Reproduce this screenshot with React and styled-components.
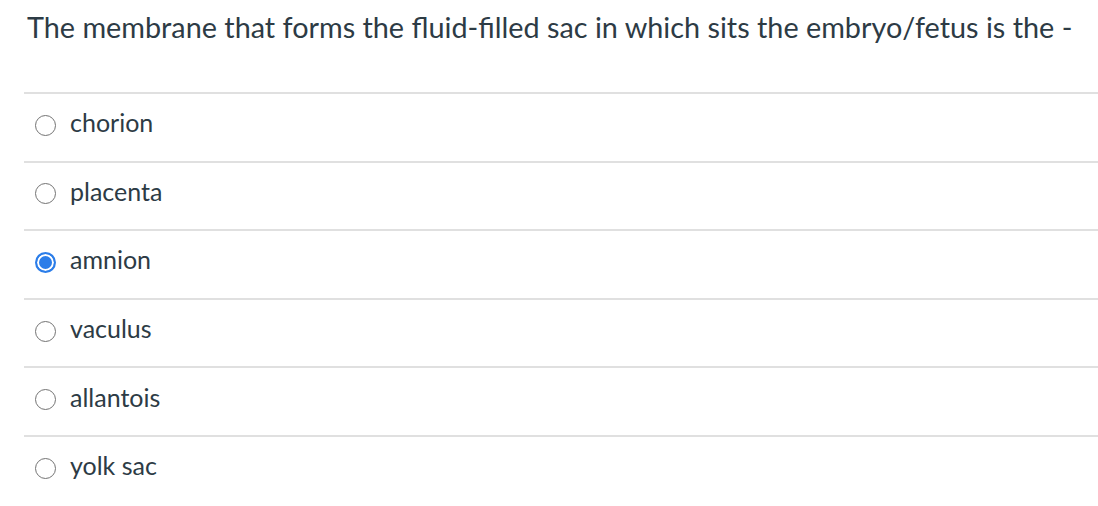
import React, { useState } from "react";
import styled, { createGlobalStyle } from "styled-components";

const GlobalStyle = createGlobalStyle`
  body {
    margin: 0;
    background: #fff;
    font-family: Lato, "Open Sans", sans-serif;
    color: #2d3b45;
  }
`;

const Page = styled.div`
  padding: 8px 0 0 24px;
`;

const Question = styled.h1`
  margin: 0 0 46px 3px;
  font-size: 28.8px;
  font-weight: 400;
  line-height: 38px;
  color: #2d3b45;
`;

const AnswerList = styled.div`
  border-top: 2px solid #e0e0e0;
`;

const Answer = styled.label`
  display: flex;
  align-items: center;
  gap: 14px;
  height: 66.6px;
  padding-left: 11px;
  border-bottom: 2px solid #e0e0e0;
  cursor: pointer;

  &:last-child {
    border-bottom-color: transparent;
  }
`;

const Radio = styled.span`
  box-sizing: border-box;
  width: 21px;
  height: 21px;
  border-radius: 50%;
  border: ${(p) => (p.checked ? "2px solid #2b7de9" : "1.6px solid #737373")};
  background: ${(p) => (p.checked ? "#2b7de9" : "#fff")};
  box-shadow: ${(p) => (p.checked ? "inset 0 0 0 2px #fff" : "none")};
  flex-shrink: 0;
  margin-top: -4px;
`;

const AnswerText = styled.span`
  font-size: 25px;
  line-height: 30px;
  color: #2d3b45;
  margin-top: -10px;
`;

const options = ["chorion", "placenta", "amnion", "vaculus", "allantois", "yolk sac"];

export default function App() {
  const [selected, setSelected] = useState("amnion");
  return (
    <Page>
      <GlobalStyle />
      <Question>
        The membrane that forms the fluid-filled sac in which sits the embryo/fetus is the -
      </Question>
      <AnswerList>
        {options.map((o) => (
          <Answer key={o} onClick={() => setSelected(o)}>
            <Radio checked={selected === o} />
            <AnswerText>{o}</AnswerText>
          </Answer>
        ))}
      </AnswerList>
    </Page>
  );
}
